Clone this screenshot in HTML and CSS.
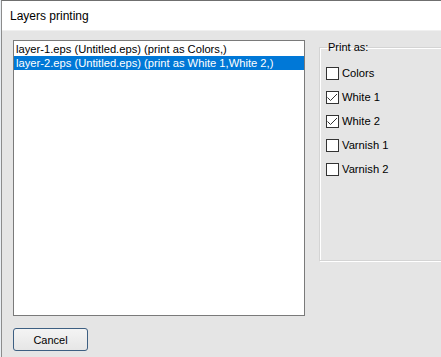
FILE: index.html
```html
<!DOCTYPE html>
<html>
<head>
<meta charset="utf-8">
<link rel="stylesheet" href="styles.css">
</head>
<body>
<div class="window">
  <div class="titlebar">Layers printing</div>
  <div class="client">
    <div class="main">
      <div class="listbox">
        <div class="item">layer-1.eps (Untitled.eps) (print as Colors,)</div>
        <div class="item selected">layer-2.eps (Untitled.eps) (print as White 1,White 2,)</div>
      </div>
      <fieldset class="group">
        <legend>Print as:</legend>
        <div class="check"><span class="box"></span><span>Colors</span></div>
        <div class="check"><span class="box"><svg width="13" height="13" viewBox="0 0 13 13"><path d="M1.5 6.5 L4.5 9.5 L11 3" fill="none" stroke="#333" stroke-width="1"/></svg></span><span>White 1</span></div>
        <div class="check"><span class="box"><svg width="13" height="13" viewBox="0 0 13 13"><path d="M1.5 6.5 L4.5 9.5 L11 3" fill="none" stroke="#333" stroke-width="1"/></svg></span><span>White 2</span></div>
        <div class="check"><span class="box"></span><span>Varnish 1</span></div>
        <div class="check"><span class="box"></span><span>Varnish 2</span></div>
      </fieldset>
    </div>
    <button class="btn">Cancel</button>
  </div>
</div>
</body>
</html>
```
FILE: styles.css
```css
html, body {
  margin: 0;
  padding: 0;
}
body {
  width: 441px;
  height: 357px;
  overflow: hidden;
  background: #e9eef3;
  font-family: "Liberation Sans", Arial, sans-serif;
  font-size: 11px;
  color: #000;
}
.window {
  margin-left: 1px;
  width: 460px;
  height: 357px;
  border-top: 1px solid #6f6f6f;
  border-left: 1px solid #8c8c8c;
  background: #e5e5e5;
  box-sizing: border-box;
}
.titlebar {
  height: 29px;
  background: #fff;
  border-bottom: 1px solid #f0f0f0;
  padding-left: 8px;
  line-height: 30px;
  font-family: "Liberation Sans", Arial, sans-serif;
  font-size: 12px;
}
.client {
  padding: 9px 0 0 11px;
}
.main {
  display: flex;
  align-items: flex-start;
}
.listbox {
  flex: none;
  width: 290px;
  height: 273px;
  background: #fff;
  border: 1px solid #7a7a7a;
  padding-top: 1px;
  box-sizing: content-box;
}
.item {
  height: 14px;
  line-height: 14px;
  padding-left: 2px;
  white-space: nowrap;
  overflow: hidden;
  font-size: 11.2px;
}
.item.selected {
  background: #0078d7;
  color: #fff;
}
.group {
  flex: 1;
  min-width: 0;
  margin: 1px 0 0 14px;
  padding: 7px 0 0 6px;
  height: 211px;
  border: 1px solid #d4d4d4;
  box-shadow: inset 1px 1px 0 #fff, 1px 1px 0 #fff;
  box-sizing: content-box;
}
.group legend {
  padding: 0 0 0 1px;
  margin-left: 1px;
  line-height: 13px;
}
.check {
  display: flex;
  align-items: center;
  height: 24px;
  font-size: 11.2px;
}
.box {
  width: 13px;
  height: 13px;
  border: 1px solid #333;
  box-sizing: border-box;
  background: #fff;
  margin-right: 3px;
  display: flex;
  align-items: center;
  justify-content: center;
}
.box svg {
  display: block;
  flex: none;
}
.btn {
  display: block;
  margin-top: 12px;
  width: 75px;
  height: 23px;
  border: 1px solid #3d5f82;
  border-radius: 3px;
  background: linear-gradient(#f4f4f4, #e6e6e6);
  font-family: "Liberation Sans", Arial, sans-serif;
  font-size: 11px;
  color: #000;
  padding: 0;
}
```
